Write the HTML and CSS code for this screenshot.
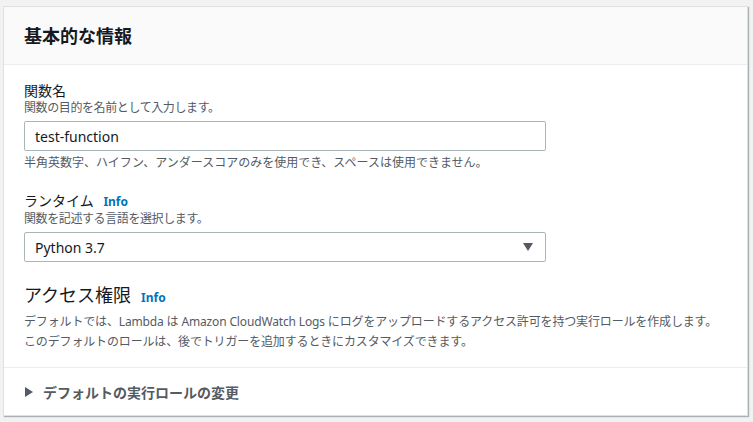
FILE: index.html
```
<html>

<head>
  <meta charset="UTF-8">
  <meta name="viewport" content="width=device-width, initial-scale=1.0">
  <title>基本的な情報</title>
  <link rel="stylesheet" href="styles.css">
</head>

<body>
  <section class="panel">
    <header class="panel-head">
      <h2>基本的な情報</h2>
    </header>
    <div class="panel-body">
      <div class="field">
        <label class="label">関数名</label>
        <div class="desc">関数の目的を名前として入力します。</div>
        <div class="input">test-function</div>
        <div class="hint">半角英数字、ハイフン、アンダースコアのみを使用でき、スペースは使用できません。</div>
      </div>
      <div class="field">
        <label class="label">ランタイム <a class="info" href="#">Info</a></label>
        <div class="desc">関数を記述する言語を選択します。</div>
        <div class="input select">
          <span>Python 3.7</span>
          <span class="caret"></span>
        </div>
      </div>
      <div class="perm">
        <h3>アクセス権限 <a class="info" href="#">Info</a></h3>
        <p>デフォルトでは、Lambda は Amazon CloudWatch Logs にログをアップロードするアクセス許可を持つ実行ロールを作成します。<br>このデフォルトのロールは、後でトリガーを追加するときにカスタマイズできます。</p>
      </div>
    </div>
    <div class="expander">
      <span class="arrow"></span>
      <span>デフォルトの実行ロールの変更</span>
    </div>
  </section>
</body>

</html>
```

FILE: styles.css
```
* {
  margin: 0;
  padding: 0;
  box-sizing: border-box;
}

body {
  background: #f2f2f2;
  font-family: "Noto Sans", "Noto Sans CJK JP", sans-serif;
  color: #16191f;
  padding: 6px 5px 0 3px;
}

.panel {
  background: #fff;
  border: 1px solid #e0e0e0;
  box-shadow: 1px 1px 1px 0 rgba(0, 28, 36, 0.3);
  width: 745px;
}

.panel-head {
  background: #fafafa;
  border-bottom: 1px solid #eaeded;
  height: 58px;
  display: flex;
  align-items: center;
  padding: 0 20px;
}

.panel-head h2 {
  font-size: 18px;
  font-weight: 700;
  line-height: 22px;
}

.panel-body {
  padding: 17px 20px 15px;
}

.field {
  margin-bottom: 21px;
}

.label {
  display: block;
  font-size: 14px;
  line-height: 18px;
}

.info {
  color: #0073bb;
  font-size: 12px;
  font-weight: 700;
  text-decoration: none;
  margin-left: 6px;
}

.desc,
.hint {
  font-size: 12px;
  line-height: 16px;
  color: #545b64;
}

.desc {
  letter-spacing: -0.4px;
}

.hint {
  margin-top: 4px;
}

.input {
  margin-top: 5px;
  width: 522px;
  height: 30px;
  border: 1px solid #aab7b8;
  border-radius: 2px;
  padding: 0 10px;
  display: flex;
  align-items: center;
  font-size: 14px;
}

.select {
  justify-content: space-between;
}

.caret {
  width: 0;
  height: 0;
  border-left: 5.5px solid transparent;
  border-right: 5.5px solid transparent;
  border-top: 8px solid #545b64;
  margin-right: 2px;
}

.perm {
  margin-top: 3px;
}

.perm h3 {
  font-size: 18px;
  font-weight: 400;
  line-height: 24px;
  display: flex;
  align-items: baseline;
}

.perm h3 .info {
  margin-left: 10px;
}

.perm p {
  margin-top: 2px;
  font-size: 12px;
  line-height: 20px;
  color: #545b64;
  white-space: nowrap;
  letter-spacing: -0.15px;
}

.expander {
  border-top: 1px solid #eaeded;
  height: 48px;
  display: flex;
  align-items: center;
  padding: 0 21px;
  gap: 10px;
  font-size: 14px;
  font-weight: 700;
  color: #545b64;
}

.arrow {
  width: 0;
  height: 0;
  border-top: 5px solid transparent;
  border-bottom: 5px solid transparent;
  border-left: 8px solid #545b64;
}
```
